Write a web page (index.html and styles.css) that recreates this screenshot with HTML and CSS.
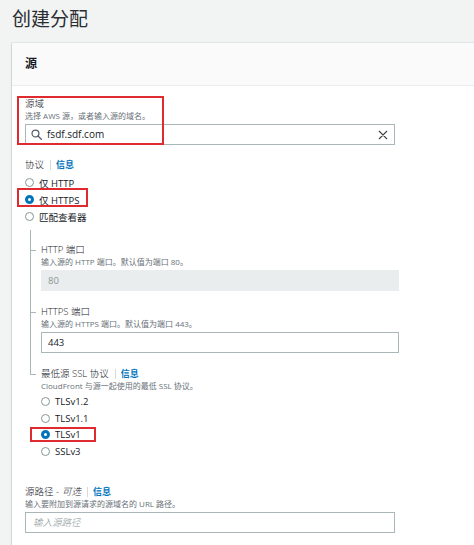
FILE: index.html
```html
<!DOCTYPE html>
<html lang="zh-CN">
<head>
<meta charset="utf-8">
<title>创建分配</title>
<link rel="stylesheet" href="styles.css">
</head>
<body>
<div class="page">
  <h1 class="title">创建分配</h1>
  <section class="card">
    <header class="card-head">源</header>
    <div class="card-body">
      <div class="field field-domain">
        <div class="label">源域</div>
        <div class="desc">选择 AWS 源，或者输入源的域名。</div>
        <div class="input search">
          <svg class="ico" width="11" height="11" viewBox="0 0 16 16"><circle cx="6.5" cy="6.5" r="5" fill="none" stroke="#545b64" stroke-width="1.8"/><line x1="10.2" y1="10.2" x2="15" y2="15" stroke="#545b64" stroke-width="1.8" stroke-linecap="round"/></svg>
          <span class="value">fsdf.sdf.com</span>
          <svg class="clear" width="10" height="10" viewBox="0 0 16 16"><path d="M2 2 L14 14 M14 2 L2 14" stroke="#3b4046" stroke-width="1.7" fill="none" stroke-linecap="round"/></svg>
        </div>
        <span class="mark mark-domain"></span>
      </div>

      <div class="field field-proto">
        <div class="label">协议<span class="sep"></span><a class="info">信息</a></div>
        <div class="radios">
          <div class="radio"><span class="dot"></span>仅 HTTP</div>
          <div class="radio on"><span class="dot"></span>仅 HTTPS<span class="mark mark-https"></span></div>
          <div class="radio"><span class="dot"></span>匹配查看器</div>
        </div>
      </div>

      <div class="nested">
        <div class="sub first">
          <div class="label">HTTP 端口</div>
          <div class="desc">输入源的 HTTP 端口。默认值为端口 80。</div>
          <div class="input wide disabled">80</div>
        </div>
        <div class="sub">
          <div class="label">HTTPS 端口</div>
          <div class="desc">输入源的 HTTPS 端口。默认值为端口 443。</div>
          <div class="input wide">443</div>
        </div>
        <div class="sub last">
          <div class="label">最低源 SSL 协议<span class="sep"></span><a class="info">信息</a></div>
          <div class="desc">CloudFront 与源一起使用的最低 SSL 协议。</div>
          <div class="radios tight">
            <div class="radio"><span class="dot"></span>TLSv1.2</div>
            <div class="radio"><span class="dot"></span>TLSv1.1</div>
            <div class="radio on"><span class="dot"></span>TLSv1<span class="mark mark-tls"></span></div>
            <div class="radio"><span class="dot"></span>SSLv3</div>
          </div>
        </div>
      </div>

      <div class="field field-path">
        <div class="label">源路径 - <i>可选</i><span class="sep"></span><a class="info">信息</a></div>
        <div class="desc">输入要附加到源请求的源域名的 URL 路径。</div>
        <div class="input placeholder">输入源路径</div>
      </div>
    </div>
  </section>
</div>
</body>
</html>
```

FILE: styles.css
```css
html, body {
  margin: 0;
  padding: 0;
  overflow: hidden;
}
body {
  background: #f2f3f3;
  font-family: "Open Sans", "Noto Sans CJK SC", sans-serif;
  color: #16191f;
}
.page {
  padding: 7px 0 0 12px;
}
.title {
  margin: 0;
  font-size: 19px;
  line-height: 24px;
  font-weight: 400;
  color: #2a2e33;
}
.card {
  margin-top: 12px;
  width: 480px;
  background: #fff;
  box-shadow: 0 1px 2px rgba(0, 28, 36, 0.25), 0 0 0 1px rgba(0, 28, 36, 0.05);
  min-height: 520px;
}
.card-head {
  height: 42px;
  line-height: 42px;
  padding-left: 13px;
  font-size: 12px;
  font-weight: 700;
  background: #fafafa;
  border-bottom: 1px solid #eaeded;
}
.card-body {
  padding: 11px 0 0 13px;
}
.field {
  position: relative;
}
.label {
  font-size: 9.5px;
  line-height: 14px;
  font-weight: 300;
  color: #16191f;
  display: flex;
  align-items: center;
}
.label i {
  font-style: italic;
  margin-left: 3px;
}
.sep {
  display: inline-block;
  width: 1px;
  height: 10px;
  background: #d5dbdb;
  margin: 0 5px 0 6px;
}
.info {
  color: #0073bb;
  font-weight: 700;
  font-size: 9px;
}
.desc {
  font-size: 8px;
  line-height: 10px;
  font-weight: 400;
  color: #687078;
}
.input {
  box-sizing: border-box;
  margin-top: 3px;
  width: 370px;
  height: 21px;
  border: 1px solid #aab7b8;
  background: #fff;
  font-size: 9.5px;
  line-height: 19px;
  padding: 0 6px;
  color: #16191f;
}
.input.search {
  display: flex;
  align-items: center;
  padding: 0 6px 0 5px;
}
.input.search .ico {
  flex: none;
}
.input.search .value {
  margin-left: 5px;
  flex: 1;
  font-size: 10px;
}
.input.search .clear {
  flex: none;
}
.input.wide {
  width: 358px;
}
.input.disabled {
  background: #eaeded;
  border-color: #eaeded;
  color: #879596;
}
.input.placeholder {
  color: #879596;
  font-style: italic;
  font-weight: 300;
  padding-left: 7px;
}
.field-proto {
  margin-top: 13px;
}
.radios {
  margin-top: 2px;
}
.radio {
  position: relative;
  display: flex;
  align-items: center;
  height: 17px;
  font-size: 9.5px;
}
.radios.tight .radio {
  height: 16.7px;
}
.dot {
  box-sizing: border-box;
  width: 9px;
  height: 9px;
  border-radius: 50%;
  border: 1px solid #879596;
  background: #fff;
  margin-right: 5px;
  flex: none;
}
.radio.on .dot {
  border: 3px solid #0073bb;
}
.nested {
  margin: 5px 0 0 5px;
}
.sub {
  position: relative;
  border-left: 1px solid #aab7b8;
  padding: 0 0 14px 10px;
}
.sub.first {
  padding-top: 13px;
}
.sub::before {
  content: "";
  position: absolute;
  left: 0;
  width: 5px;
  height: 1px;
  background: #aab7b8;
  top: 7px;
}
.sub.first::before {
  top: 20px;
}
.sub.last {
  border-left: none;
  padding-left: 11px;
  padding-bottom: 0;
}
.sub.last::before {
  top: -1px;
  height: 8px;
  border-left: 1px solid #aab7b8;
  border-bottom: 1px solid #aab7b8;
  background: none;
}
.field-path {
  margin-top: 25px;
}
.mark {
  position: absolute;
  border: 2px solid #df2a30;
  pointer-events: none;
}
.mark-domain {
  left: -8px;
  top: -1px;
  width: 143px;
  height: 45px;
}
.mark-https {
  left: -8px;
  top: -3px;
  width: 67px;
  height: 15px;
}
.mark-tls {
  left: -11px;
  top: 1px;
  width: 62px;
  height: 11px;
}
```
